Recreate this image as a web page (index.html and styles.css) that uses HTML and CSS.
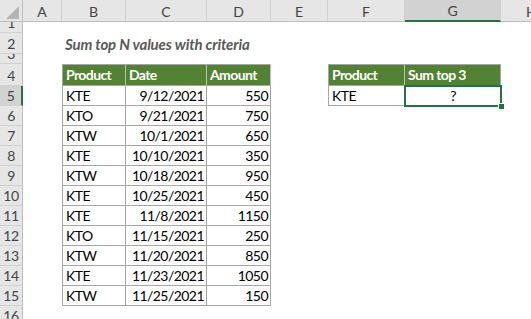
FILE: index.html
```html
<!DOCTYPE html>
<html>
<head>
<meta charset="utf-8">
<link rel="stylesheet" href="styles.css">
</head>
<body>
<div class="sheet">
  <div class="corner"><svg width="23" height="22" viewBox="0 0 23 22"><polygon points="19,6 19,19 6,19" fill="#b4b4b4"/></svg></div>
  <div class="ch">A</div>
  <div class="ch">B</div>
  <div class="ch">C</div>
  <div class="ch">D</div>
  <div class="ch">E</div>
  <div class="ch">F</div>
  <div class="ch sel">G</div>
  <div class="ch edge">H</div>

  <div class="rh">1</div>
  <div class="rh">2</div>
  <div class="rh">3</div>
  <div class="rh">4</div>
  <div class="rh sel">5</div>
  <div class="rh">6</div>
  <div class="rh">7</div>
  <div class="rh">8</div>
  <div class="rh">9</div>
  <div class="rh">10</div>
  <div class="rh">11</div>
  <div class="rh">12</div>
  <div class="rh">13</div>
  <div class="rh">14</div>
  <div class="rh">15</div>
  <div class="rh">16</div>

  <div class="title">Sum top N values with criteria</div>

  <div class="tbl t1">
    <div class="c hd first">Product</div><div class="c hd">Date</div><div class="c hd">Amount</div>
    <div class="c first">KTE</div><div class="c r">9/12/2021</div><div class="c r">550</div>
    <div class="c first">KTO</div><div class="c r">9/21/2021</div><div class="c r">750</div>
    <div class="c first">KTW</div><div class="c r">10/1/2021</div><div class="c r">650</div>
    <div class="c first">KTE</div><div class="c r">10/10/2021</div><div class="c r">350</div>
    <div class="c first">KTW</div><div class="c r">10/18/2021</div><div class="c r">950</div>
    <div class="c first">KTE</div><div class="c r">10/25/2021</div><div class="c r">450</div>
    <div class="c first">KTE</div><div class="c r">11/8/2021</div><div class="c r">1150</div>
    <div class="c first">KTO</div><div class="c r">11/15/2021</div><div class="c r">250</div>
    <div class="c first">KTW</div><div class="c r">11/20/2021</div><div class="c r">850</div>
    <div class="c first">KTE</div><div class="c r">11/23/2021</div><div class="c r">1050</div>
    <div class="c first">KTW</div><div class="c r">11/25/2021</div><div class="c r">150</div>
  </div>

  <div class="tbl t2">
    <div class="c hd first">Product</div><div class="c hd">Sum top 3</div>
    <div class="c first">KTE</div><div class="c ctr">?</div>
    <div class="selbox"><div class="handle"></div></div>
  </div>
</div>
</body>
</html>
```

FILE: styles.css
```css
* { box-sizing: border-box; }
html, body { margin: 0; padding: 0; background: #fff; }
body { width: 531px; height: 319px; overflow: hidden; }

.sheet {
  display: grid;
  grid-template-columns: 23px 39px 64px 81px 64px 57px 77px 96px 30px;
  grid-template-rows: 22px 11px 21px 10px 22px repeat(11, 20px) 20px;
  font-family: "Lato", "Liberation Sans", sans-serif;
  font-size: 14px;
  color: #000;
  overflow: hidden;
}

.corner {
  background: #e6e6e6;
  border-right: 1px solid #bdbdbd;
  border-bottom: 1px solid #bdbdbd;
}
.corner svg { display: block; }

.ch {
  background: #e6e6e6;
  border-right: 1px solid #d0d0d0;
  border-bottom: 1px solid #bdbdbd;
  display: flex;
  align-items: center;
  justify-content: center;
  color: #444;
  padding-top: 1px;
}
.ch.sel {
  background: #d2d2d2;
  border-bottom: 2px solid #217346;
}
.ch.edge {
  justify-content: flex-start;
  padding-left: 25px;
  overflow: hidden;
  border-right: none;
}

.rh {
  grid-column: 1;
  background: #e6e6e6;
  border-right: 1px solid #bdbdbd;
  border-bottom: 1px solid #d0d0d0;
  display: flex;
  align-items: flex-end;
  justify-content: center;
  overflow: hidden;
  line-height: 18px;
  color: #444;
  letter-spacing: -0.4px;
}
.rh.sel {
  background: #d2d2d2;
  border-right: 2px solid #217346;
}

.title {
  grid-row: 3;
  grid-column: 3 / 9;
  display: flex;
  align-items: flex-end;
  padding-left: 3px;
  padding-bottom: 1px;
  font-size: 15px;
  font-weight: bold;
  font-style: italic;
  color: #595959;
  white-space: nowrap;
  letter-spacing: -0.15px;
}

.tbl { display: grid; position: relative; }
.t1 {
  grid-row: 5 / 17;
  grid-column: 3 / 6;
  grid-template-columns: 64px 81px 64px;
  grid-template-rows: 22px repeat(11, 20px);
}
.t2 {
  grid-row: 5 / 7;
  grid-column: 7 / 9;
  grid-template-columns: 77px 96px;
  grid-template-rows: 22px 20px;
}

.c {
  border-right: 1px solid #a6a6a6;
  border-bottom: 1px solid #a6a6a6;
  padding: 0 2px 0 3px;
  display: flex;
  align-items: flex-end;
  line-height: 19px;
  white-space: nowrap;
  letter-spacing: -0.55px;
}
.c.first { border-left: 1px solid #a6a6a6; }
.c.hd {
  background: #548235;
  color: #fff;
  font-weight: bold;
  border-top: 1px solid #a6a6a6;
  border-right-color: #b4c7a8;
  line-height: 20px;
  letter-spacing: -0.6px;
}
.c.hd:last-child, .t2 .c.hd:nth-child(2) { border-right-color: #a6a6a6; }
.c.r { justify-content: flex-end; }
.c.ctr { justify-content: center; }

.selbox {
  position: absolute;
  left: 76px;
  top: 21px;
  width: 98px;
  height: 22px;
  border: 2px solid #217346;
}
.handle {
  position: absolute;
  right: -5px;
  bottom: -5px;
  width: 7px;
  height: 7px;
  background: #217346;
  border: 1px solid #fff;
}
```
